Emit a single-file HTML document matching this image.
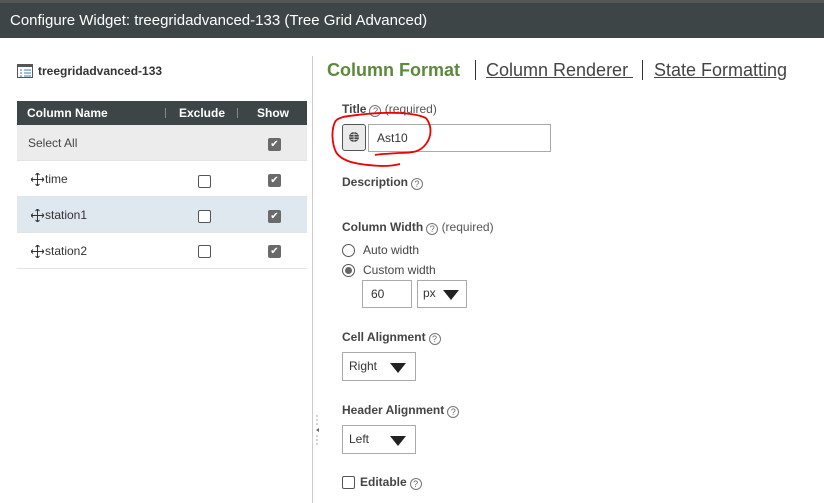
<!DOCTYPE html>
<html><head><meta charset="utf-8"><style>
*{box-sizing:border-box;margin:0;padding:0}
body{width:824px;height:503px;overflow:hidden;background:#fff;font-family:"Liberation Sans",Arial,sans-serif;color:#333;position:relative}
.a{position:absolute}
.q{display:inline-block;width:12px;height:12px;border:1px solid #777;border-radius:50%;font-size:9px;line-height:10px;text-align:center;color:#666;vertical-align:-1px;margin-left:3px;font-weight:normal}
.lbl{font-size:12px;font-weight:bold;color:#444}
.cb{position:absolute;width:13px;height:13px;border:1px solid #555;border-radius:2px;background:#fff}
.cbc{position:absolute;width:13px;height:13px;border-radius:2px;background:#6a6a6a;color:#fff;font-size:10px;line-height:13px;text-align:center}
.row{position:absolute;left:17px;width:290px;height:36px;border-bottom:1px solid #e3e3e3;font-size:12px;line-height:36px}
.row svg{position:absolute;left:14px;top:12px}
.row span.t{position:absolute;left:28px}
.sel{position:absolute;width:74px;height:29px;border:1px solid #aaa;font-size:12px;line-height:27px;padding-left:6px}
.tri{position:absolute;right:9px;top:10px;width:0;height:0;border-left:8px solid transparent;border-right:8px solid transparent;border-top:10px solid #222}
</style></head><body>
<div class="a" style="left:0;top:0;width:824px;height:3px;background:#555"></div>
<div class="a" style="left:0;top:3px;width:824px;height:35px;background:#3e4547;color:#fff;font-size:15px;line-height:35px;padding-left:10px">Configure Widget: treegridadvanced-133 (Tree Grid Advanced)</div>

<svg class="a" style="left:17px;top:64px" width="16" height="14"><rect x="0.5" y="0.5" width="15" height="13" fill="#fff" stroke="#555"/><rect x="0" y="0" width="16" height="3" fill="#555"/><path d="M3 6h2M3 9h2M3 12h2M7 6h7M7 9h7M7 12h7" stroke="#3a7fc0"/></svg>
<div class="a" style="left:38px;top:64px;font-size:12px;font-weight:bold;color:#333">treegridadvanced-133</div>

<div class="a" style="left:17px;top:101px;width:290px;height:24px;background:#3e4547;color:#fff;font-size:12px;font-weight:bold;line-height:24px">
<span class="a" style="left:10px">Column Name</span>
<span class="a" style="left:148px;top:7px;width:1px;height:10px;background:#888"></span>
<span class="a" style="left:162px">Exclude</span>
<span class="a" style="left:220px;top:7px;width:1px;height:10px;background:#888"></span>
<span class="a" style="left:240px">Show</span>
</div>
<div class="row" style="top:125px;background:#ececec"><span style="margin-left:11px;color:#444">Select All</span><div class="cbc" style="left:251px;top:13px">✔</div></div>
<div class="row" style="top:161px"><svg width="13" height="13"><path d="M6.5 0v13M0 6.5h13M4.5 2l2-2 2 2M4.5 11l2 2 2-2M2 4.5l-2 2 2 2M11 4.5l2 2-2 2" fill="none" stroke="#333"/></svg><span class="t">time</span><div class="cb" style="left:181px;top:14px"></div><div class="cbc" style="left:251px;top:13px">✔</div></div>
<div class="row" style="top:197px;background:#dfe7ef"><svg width="13" height="13"><path d="M6.5 0v13M0 6.5h13M4.5 2l2-2 2 2M4.5 11l2 2 2-2M2 4.5l-2 2 2 2M11 4.5l2 2-2 2" fill="none" stroke="#333"/></svg><span class="t">station1</span><div class="cb" style="left:181px;top:13px"></div><div class="cbc" style="left:251px;top:13px">✔</div></div>
<div class="row" style="top:233px"><svg width="13" height="13"><path d="M6.5 0v13M0 6.5h13M4.5 2l2-2 2 2M4.5 11l2 2 2-2M2 4.5l-2 2 2 2M11 4.5l2 2-2 2" fill="none" stroke="#333"/></svg><span class="t">station2</span><div class="cb" style="left:181px;top:12px"></div><div class="cbc" style="left:251px;top:12px">✔</div></div>

<div class="a" style="left:312px;top:56px;width:1px;height:447px;background:#ccc"></div>
<svg class="a" style="left:315px;top:415px" width="5" height="30"><path d="M2 0v2M2 4v2M2 8v2M2 20v2M2 24v2M2 28v2" stroke="#aaa"/><path d="M1 15l3-2v4z" fill="#666"/></svg>

<div class="a" style="left:327px;top:60px;font-size:18px;font-weight:bold;color:#5b8a3c">Column Format</div>
<div class="a" style="left:475px;top:60px;width:1px;height:20px;background:#333"></div>
<div class="a" style="left:486px;top:60px;font-size:18px;color:#444;text-decoration:underline">Column Renderer&nbsp;</div>
<div class="a" style="left:642px;top:60px;width:1px;height:20px;background:#333"></div>
<div class="a" style="left:654px;top:60px;font-size:18px;color:#444;text-decoration:underline">State Formatting</div>

<div class="a lbl" style="left:342px;top:102px">Title<span class="q">?</span> <span style="font-weight:normal;color:#555">(required)</span></div>
<div class="a" style="left:342px;top:124px;width:24px;height:27px;border:1px solid #555;border-radius:3px;background:#ebebeb"></div>
<svg class="a" style="left:348px;top:131px" width="12" height="12"><circle cx="6" cy="6" r="5" fill="#444"/><path d="M1 6h10M6 1v10M2.5 3.5h7M2.5 8.5h7" stroke="#ebebeb" stroke-width="0.8"/></svg>
<div class="a" style="left:368px;top:124px;width:183px;height:28px;border:1px solid #aaa;font-size:12px;line-height:26px;padding-left:8px">Ast10</div>
<svg class="a" style="left:328px;top:108px" width="110" height="64"><path d="M98 10C85 4 60 4 38 6 22 8 10 8 7 14 3 22 4 36 8 44 14 54 30 57 55 58 63 58 68 57 72 56" fill="none" stroke="#e00" stroke-width="1.8"/><path d="M98 10C104 18 104 28 98 36 92 44 85 45 70 45 60 46 50 46 47 47" fill="none" stroke="#e00" stroke-width="1.8"/></svg>

<div class="a lbl" style="left:342px;top:175px">Description<span class="q">?</span></div>
<div class="a lbl" style="left:342px;top:220px">Column Width<span class="q">?</span> <span style="font-weight:normal;color:#555">(required)</span></div>
<div class="a" style="left:342px;top:244px;width:13px;height:13px;border:1px solid #555;border-radius:50%"></div>
<div class="a" style="left:363px;top:243px;font-size:12px;color:#444">Auto width</div>
<div class="a" style="left:342px;top:264px;width:13px;height:13px;border:1px solid #555;border-radius:50%"><div style="margin:2px;width:7px;height:7px;border-radius:50%;background:#666"></div></div>
<div class="a" style="left:363px;top:263px;font-size:12px;color:#444">Custom width</div>
<div class="a" style="left:362px;top:280px;width:50px;height:28px;border:1px solid #aaa;font-size:12px;line-height:26px;padding-left:8px">60</div>
<div class="a" style="left:417px;top:280px;width:50px;height:28px;border:1px solid #aaa;font-size:12px;line-height:24px;padding-left:5px">px<div class="tri" style="right:7px;top:9px"></div></div>

<div class="a lbl" style="left:342px;top:330px">Cell Alignment<span class="q">?</span></div>
<div class="sel" style="left:342px;top:352px">Right<div class="tri"></div></div>
<div class="a lbl" style="left:342px;top:403px">Header Alignment<span class="q">?</span></div>
<div class="sel" style="left:342px;top:425px">Left<div class="tri"></div></div>
<div class="cb" style="left:342px;top:476px"></div>
<div class="a lbl" style="left:360px;top:475px">Editable<span class="q">?</span></div>
</body></html>
